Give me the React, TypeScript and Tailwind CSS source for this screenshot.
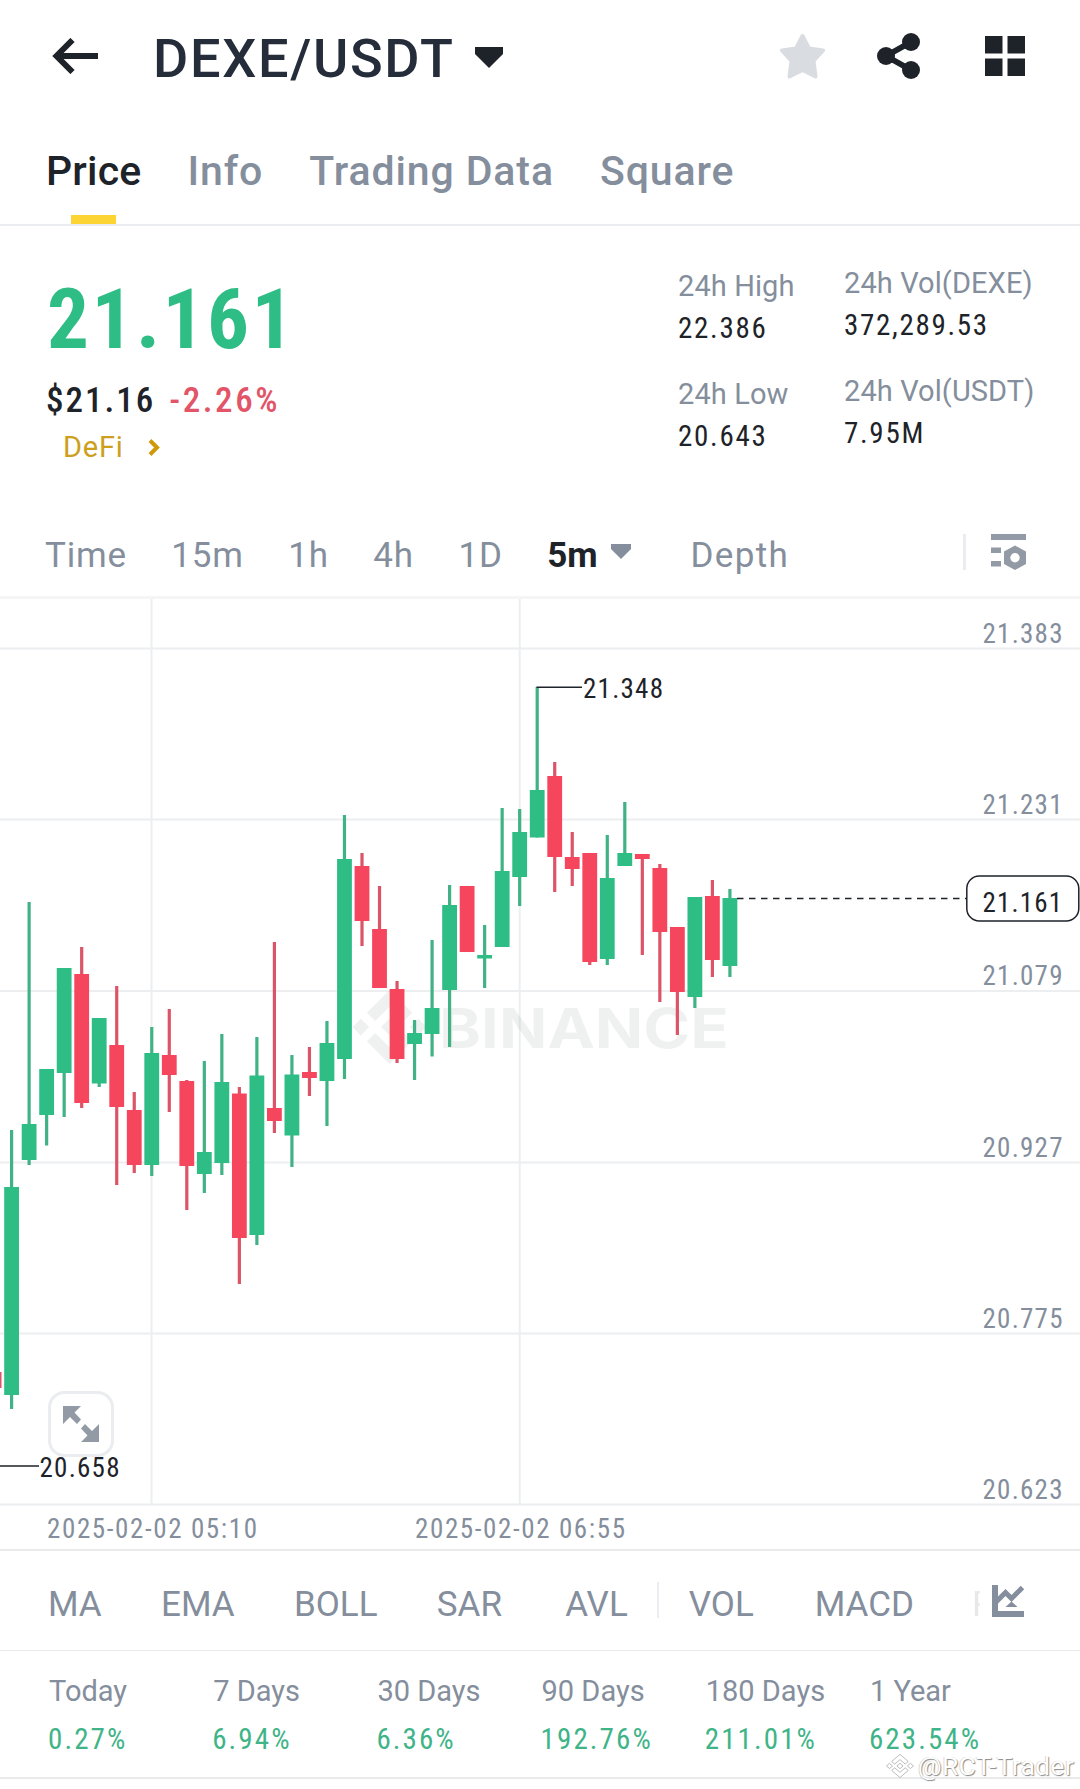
const tabs = ["Price", "Info", "Trading Data", "Square"];

const stats = [
  [
    { label: "24h High", value: "22.386" },
    { label: "24h Low", value: "20.643" },
  ],
  [
    { label: "24h Vol(DEXE)", value: "372,289.53" },
    { label: "24h Vol(USDT)", value: "7.95M" },
  ],
];

const intervals = ["Time", "15m", "1h", "4h", "1D"];

const mainIndicators = ["MA", "EMA", "BOLL", "SAR", "AVL"];

const changes = [
  { label: "Today", value: "0.27%" },
  { label: "7 Days", value: "6.94%" },
  { label: "30 Days", value: "6.36%" },
  { label: "90 Days", value: "192.76%" },
  { label: "180 Days", value: "211.01%" },
  { label: "1 Year", value: "623.54%" },
];

const gridLines = [
  { y: 648.5, price: "21.383" },
  { y: 819.5, price: "21.231" },
  { y: 991, price: "21.079" },
  { y: 1162.5, price: "20.927" },
  { y: 1333.5, price: "20.775" },
  { y: 1504.5, price: "20.623" },
];

// direction, wick top, body top, body bottom, wick bottom
type Candle = ["up" | "down", number, number, number, number];

const candles: Candle[] = [
  ["up", 1130, 1187, 1395, 1409],
  ["up", 902, 1124, 1160, 1165],
  ["up", 1069, 1069, 1115, 1145.5],
  ["up", 968, 968, 1073, 1117],
  ["down", 947, 974, 1103, 1108],
  ["up", 1018, 1018, 1083.5, 1087],
  ["down", 986, 1045, 1107, 1185],
  ["down", 1092, 1110, 1165, 1173],
  ["up", 1027, 1053, 1165, 1176],
  ["down", 1009, 1055, 1075, 1112],
  ["down", 1080, 1081, 1166, 1210],
  ["up", 1061, 1152, 1174, 1193],
  ["up", 1034, 1082, 1163, 1175],
  ["down", 1087, 1093.5, 1238, 1284],
  ["up", 1037, 1075.5, 1235, 1245],
  ["down", 942, 1108, 1121, 1133],
  ["up", 1055, 1074.5, 1135.5, 1167],
  ["down", 1047, 1072, 1078, 1096],
  ["up", 1021, 1043, 1081, 1126],
  ["up", 815, 859, 1059, 1079],
  ["down", 853, 866, 921, 946],
  ["down", 886, 929, 988, 988],
  ["down", 981, 989, 1059, 1063],
  ["up", 1020, 1033, 1044, 1080],
  ["up", 940, 1008, 1034, 1056.5],
  ["up", 885, 905, 990, 1047],
  ["down", 886, 886, 952, 952],
  ["up", 925, 955, 958.5, 988],
  ["up", 808, 871, 947, 947],
  ["up", 809, 832, 877, 906],
  ["up", 687, 790, 837.5, 837.5],
  ["down", 762, 776, 857, 892],
  ["down", 832, 857, 869, 886],
  ["down", 853, 853, 962, 965],
  ["up", 835, 878, 959, 965],
  ["up", 802, 853, 866, 866],
  ["down", 854, 854, 859, 955],
  ["down", 864, 868, 932, 1002],
  ["down", 927, 927, 992, 1035],
  ["up", 897, 897, 997, 1008],
  ["down", 880, 896, 960, 977],
  ["up", 889, 898, 966, 977],
];

const BINANCE_MARK =
  "M38.73 53.2 63.31 28.63 87.89 53.22 102.19 38.93 63.31 0 24.43 38.9zM0 63.31 14.3 49 28.6 63.31 14.3 77.6zM38.73 73.41 63.31 98 87.89 73.4 102.19 87.68 63.31 126.61 24.43 87.71zM98 63.31 112.3 49 126.6 63.31 112.3 77.6zM77.83 63.3 63.31 48.78 48.78 63.31 63.31 77.8z";

function Header() {
  return (
    <header className="flex h-[116px] items-center pl-[52px] pr-[55px] text-[#1e2329]">
      <svg className="mb-1 h-9 w-[46px]" viewBox="0 0 46 36" fill="none" stroke="currentColor" strokeWidth="6">
        <path d="M46 18H5M20.5 2 4.5 18l16 16" />
      </svg>
      <h1 className="ml-[55px] pt-0.5 text-[54px] font-medium leading-none tracking-[1.7px] text-[#252d3b]">
        DEXE/USDT
      </h1>
      <svg className="mb-0.5 ml-5 h-[21px] w-7" viewBox="0 0 28 21" fill="currentColor">
        <path d="M0 0h28v7L14 21 0 7z" />
      </svg>
      <div className="mb-1 ml-auto flex items-center">
        <svg
          className="mr-[52px] h-[46px] w-[45px] text-[#d9dce1]"
          viewBox="0 0 45 46"
          fill="currentColor"
          stroke="currentColor"
          strokeWidth="4"
          strokeLinejoin="round"
        >
          <path d="M22.5 3 29 15.5 43 17.5 33.5 28 35.5 43.5 22.5 37 9.5 43.5 11.5 28 2 17.5 16 15.5z" />
        </svg>
        <svg className="mr-[65px] h-[46px] w-[43px]" viewBox="0 0 43 46" fill="currentColor">
          <path d="M9 23 34 9M9 23l25 14" stroke="currentColor" strokeWidth="6" />
          <circle cx="9" cy="23" r="9" />
          <circle cx="34" cy="9" r="9" />
          <circle cx="34" cy="37" r="9" />
        </svg>
        <svg className="h-10 w-10" viewBox="0 0 40 40" fill="currentColor">
          <path d="M0 0h17.5v17.5H0zM22.5 0H40v17.5H22.5zM0 22.5h17.5V40H0zM22.5 22.5H40V40H22.5z" />
        </svg>
      </div>
    </header>
  );
}

function Tabs() {
  return (
    <nav className="flex h-[110px] gap-[46px] border-b-2 border-[#eaecef] pl-[46px] text-[41px] font-medium text-[#848e9c]">
      {tabs.map((tab) => {
        const active = tab === "Price";

        return (
          <div
            key={tab}
            className={`relative flex items-center pt-[3px] ${
              active ? "tracking-[0.2px] text-[#1e2329]" : "tracking-[0.9px]"
            }`}
          >
            {tab}
            {active && (
              <span className="absolute bottom-0 left-[25px] h-[9px] w-[45px] bg-[#fcd535]" />
            )}
          </div>
        );
      })}
    </nav>
  );
}

function Summary() {
  return (
    <section className="flex h-[285px] pl-[46px]">
      <div className="w-[632px] pt-[52px]">
        <p className="pl-px text-[83px] font-bold leading-[84px] tracking-[2.5px] text-[#2ebd85] [font-stretch:85%]">
          21.161
        </p>
        <p className="mt-[17px] flex gap-[14px] text-[35px] font-medium leading-[44px] tracking-[2px] [font-stretch:85%]">
          <span className="text-[#1e2329]">$21.16</span>
          <span className="tracking-[2.6px] text-[#e25468]">-2.26%</span>
        </p>
        <p className="mt-[6px] flex items-center gap-6 pl-[17px] text-[29px] leading-9 tracking-[0.8px] text-[#cd9f1c]">
          DeFi
          <svg className="h-[17px] w-3" viewBox="0 0 12 17" fill="none" stroke="#d0980b" strokeWidth="4">
            <path d="M2 1.5 9 8.5l-7 7" />
          </svg>
        </p>
      </div>
      {stats.map((column, index) => (
        <dl
          key={column[0].label}
          className={`flex flex-col gap-6 text-[29px] leading-[42px] ${
            index === 0 ? "w-[166px] pt-[39px]" : "pt-9"
          }`}
        >
          {column.map((item) => (
            <div key={item.label}>
              <dt className="tracking-[0.1px] text-[#848e9c]">{item.label}</dt>
              <dd className="tracking-[1.7px] text-[#1e2329] [font-stretch:85%]">{item.value}</dd>
            </div>
          ))}
        </dl>
      ))}
    </section>
  );
}

function Intervals() {
  return (
    <div className="flex h-[88px] items-center border-b-[3px] border-[#f5f5f5] pl-[45px] pr-[54px] text-[35px] tracking-[0.8px] text-[#848e9c]">
      <div className="flex gap-[44.5px] pt-[5px]">
        {intervals.map((interval) => (
          <span key={interval}>{interval}</span>
        ))}
        <span className="font-bold tracking-normal text-[#1e2329]">5m</span>
      </div>
      <svg className="mb-1 ml-[13px] h-[15px] w-5" viewBox="0 0 20 15" fill="currentColor">
        <path d="M0 0h20v5l-10 10L0 5z" />
      </svg>
      <span className="ml-[60px] pt-[5px] tracking-[1.3px]">Depth</span>
      <span className="mb-1 ml-auto h-9 w-[3px] bg-[#eaecef]" />
      <svg className="mb-1 ml-[25px] h-9 w-[35px] text-[#929aa5]" viewBox="0 0 35 36" fill="currentColor">
        <path d="M0 0h35v6H0zM0 13.5h10V19H0zM0 27h10v5.5H0z" />
        <path
          fillRule="evenodd"
          d="M24 11.5 35 17.5V30L24 36 13 30V17.5zM24 19a4.7 4.7 0 1 0 0 9.4 4.7 4.7 0 0 0 0-9.4z"
        />
      </svg>
    </div>
  );
}

function Chart() {
  return (
    <svg
      className="block h-[950px] w-full font-['Roboto',sans-serif] text-[27px] [font-stretch:85%]"
      viewBox="0 599 1080 950"
    >
      <g stroke="#eceeef" strokeWidth="2">
        {gridLines.map((line) => (
          <path key={line.price} d={`M0 ${line.y}H1080`} />
        ))}
        <path d="M151.5 599V1504M519.7 599V1504" />
      </g>

      <g fill="#1e3c32" fillOpacity="0.07">
        <path d={BINANCE_MARK} transform="translate(352.5 990) scale(0.585)" />
        <text
          x="439"
          y="1047.5"
          textLength="290"
          lengthAdjust="spacingAndGlyphs"
          className="font-['Inter',sans-serif] text-[55.5px] font-bold [font-stretch:100%]"
        >
          BINANCE
        </text>
      </g>

      <path d="M0 1372h1.5v16H0z" fill="#dc5468" />
      {candles.map(([direction, high, top, bottom, low], index) => {
        const x = 11.6 + index * 17.52;
        const up = direction === "up";

        return (
          <g key={index}>
            <rect x={x - 1.6} y={high} width="3.2" height={low - high} fill={up ? "#40b285" : "#dc5468"} />
            <rect x={x - 7.4} y={top} width="14.8" height={bottom - top} fill={up ? "#2ebd85" : "#f6465d"} />
          </g>
        );
      })}

      <g stroke="#1e2329" strokeWidth="1.6">
        <path d="M536.5 687.3H582M0 1466H39" />
        <path d="M737 898.5H966" strokeDasharray="6.5 5.5" />
      </g>
      <rect x="966.8" y="876" width="112" height="45" rx="12.5" fill="#fff" stroke="#1e2329" strokeWidth="1.5" />

      <g fill="#1e2329">
        <text x="583" y="698" textLength="80">21.348</text>
        <text x="39.5" y="1477" textLength="80">20.658</text>
        <text x="982.5" y="912" textLength="79.5">21.161</text>
      </g>
      <g fill="#848e9c">
        {gridLines.map((line) => (
          <text key={line.price} x="982.5" y={line.y - 6} textLength="80">
            {line.price}
          </text>
        ))}
        <text x="47" y="1538" textLength="210">2025-02-02 05:10</text>
        <text x="415" y="1538" textLength="210">2025-02-02 06:55</text>
      </g>

      <rect x="49.5" y="1392.5" width="63" height="63" rx="15" fill="#fff" stroke="#eaecef" strokeWidth="3" />
      <path
        fill="#929aa5"
        d="M63 1406h18l-6.5 6.5 6.5 7-4 4.5-7-7-7 7zM99 1442H81l6.5-6.5-6.5-7 4-4.5 7 7 7-7z"
      />
    </svg>
  );
}

function Indicators() {
  return (
    <div className="flex h-[102px] items-center border-b border-t-2 border-b-[#e8eaec] border-t-[#e8eaec] pl-12 pr-[56px] pt-[9px] text-[35px] text-[#848e9c]">
      <div className="flex gap-[59.3px]">
        {mainIndicators.map((name) => (
          <span key={name} className="last:ml-1">
            {name}
          </span>
        ))}
      </div>
      <span className="mb-[11px] ml-[29px] h-9 w-0.5 bg-[#eaecef]" />
      <span className="ml-[30px]">VOL</span>
      <span className="ml-[61px]">MACD</span>
      <span className="ml-[58px] w-2 opacity-20 [mask-image:linear-gradient(to_right,black_6px,transparent_12px)]">
        R
      </span>
      <svg className="mb-[9px] ml-auto h-8 w-8 shrink-0" viewBox="0 0 32 32" fill="currentColor">
        <path d="M0 0h6v26h26v6H0z" />
        <path d="M4 17 13.5 7.5l6 6L30.5 2.5" fill="none" stroke="currentColor" strokeWidth="5" />
        <path d="M19.5 16.5 25.5 22h-12z" />
      </svg>
    </div>
  );
}

function Changes() {
  return (
    <div className="relative grid grid-cols-[repeat(6,164.2px)] border-b-2 border-[#e8eaec] pb-[14px] pl-12 pt-4 text-[29px] leading-[48px]">
      {changes.map((change) => (
        <div key={change.label}>
          <p className="pl-px text-[#848e9c]">{change.label}</p>
          <p className="tracking-[2.1px] text-[#3fb488] [font-stretch:85%]">{change.value}</p>
        </div>
      ))}
      <div className="absolute -bottom-[5px] right-1.5 flex items-center gap-1 text-[26.5px] leading-8 tracking-[0.3px] text-white [text-shadow:1px_1px_1px_#8a8a8a,-0.5px_-0.5px_0.5px_#bbb]">
        <svg className="h-6 w-7" viewBox="-2 -2 131 131" preserveAspectRatio="none" fill="#fff" stroke="#aaa" strokeWidth="4">
          <path d={BINANCE_MARK} />
        </svg>
        @RCT-Trader
      </div>
    </div>
  );
}

export default function App() {
  return (
    <div className="min-h-[1789px] w-[1080px] overflow-hidden bg-white font-['Roboto',sans-serif]">
      <Header />
      <Tabs />
      <Summary />
      <Intervals />
      <Chart />
      <Indicators />
      <Changes />
    </div>
  );
}
